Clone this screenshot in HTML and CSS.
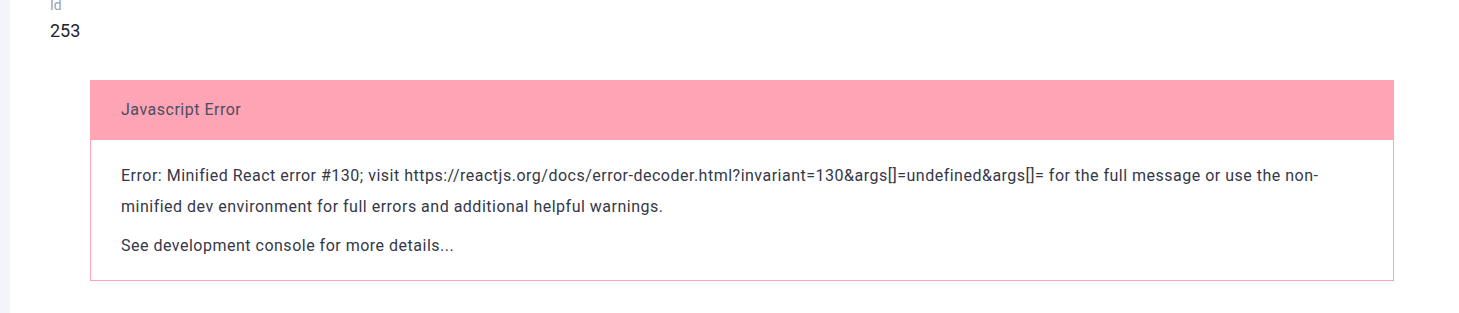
FILE: index.html
```html
<!DOCTYPE html>
<html>
<head>
<meta charset="utf-8">
<link rel="stylesheet" href="styles.css">
</head>
<body>
<div class="page">
  <aside class="sidebar"></aside>
  <main class="main">
    <div class="field">
      <div class="field-label">Id</div>
      <div class="field-value">253</div>
    </div>
    <section class="error-card">
      <header class="error-header">Javascript Error</header>
      <div class="error-body">
        <p class="error-msg">Error: Minified React error #130; visit https://reactjs.org/docs/error-decoder.html?invariant=130&amp;args[]=undefined&amp;args[]= for the full message or use the non-minified dev environment for full errors and additional helpful warnings.</p>
        <p class="error-msg">See development console for more details...</p>
      </div>
    </section>
  </main>
</div>
</body>
</html>
```
FILE: styles.css
```css
html, body {
  margin: 0;
  padding: 0;
  background: #ffffff;
  font-family: Roboto, "Liberation Sans", sans-serif;
  overflow: hidden;
}
.page {
  display: flex;
  height: 313px;
}
.sidebar {
  width: 10px;
  flex: 0 0 10px;
  background: #f4f5fa;
}
.main {
  flex: 1;
  padding: 0 25px 0 40px;
  margin-top: -5px;
}
.field-label {
  font-size: 14px;
  line-height: 20px;
  color: #9a9eab;
  margin-bottom: 4px;
}
.field-value {
  font-size: 18px;
  line-height: 24px;
  color: #1f2230;
}
.error-card {
  margin: 37px 40px 0 40px;
  border: 1px solid #ffa4b4;
}
.error-header {
  background: #ffa4b4;
  padding: 17px 30px 18px 30px;
  font-size: 16px;
  line-height: 24px;
  letter-spacing: 0.5px;
  color: #4a4e63;
}
.error-body {
  padding: 20px 30px 19px 30px;
}
.error-msg {
  margin: 0 0 8px 0;
  font-size: 16px;
  line-height: 31px;
  font-weight: 400;
  letter-spacing: 0.5px;
  color: #353748;
}
.error-msg:last-child {
  margin-bottom: 0;
}
```
